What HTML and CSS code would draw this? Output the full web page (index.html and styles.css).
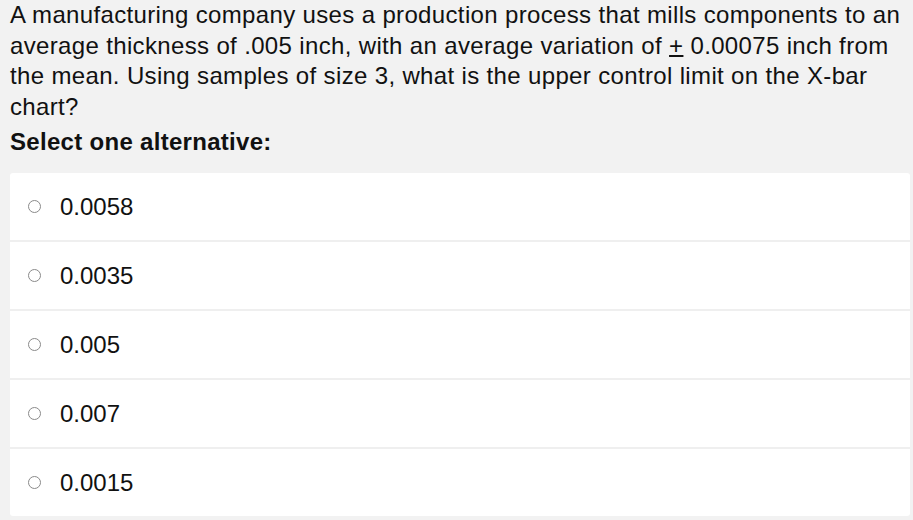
FILE: index.html
```html
<!DOCTYPE html>
<html>
<head>
<meta charset="utf-8">
<link rel="stylesheet" href="styles.css">
</head>
<body>
<div class="page">
  <p class="question">A manufacturing company uses a production process that mills components to an average thickness of .005 inch, with an average variation of <u>+</u> 0.00075 inch from the mean. Using samples of size 3, what is the upper control limit on the X-bar chart?</p>
  <p class="prompt">Select one alternative:</p>
  <ul class="options">
    <li class="option"><span class="radio"></span><span class="label">0.0058</span></li>
    <li class="option"><span class="radio"></span><span class="label">0.0035</span></li>
    <li class="option"><span class="radio"></span><span class="label">0.005</span></li>
    <li class="option"><span class="radio"></span><span class="label">0.007</span></li>
    <li class="option"><span class="radio"></span><span class="label">0.0015</span></li>
  </ul>
</div>
</body>
</html>
```

FILE: styles.css
```css
html, body {
  margin: 0;
  padding: 0;
  background: #f2f2f2;
}
.page {
  padding: 0 3px 0 10px;
  font-family: "Liberation Sans", Arial, sans-serif;
  color: #111;
}
.question {
  margin: 0;
  font-size: 24px;
  letter-spacing: 0.35px;
  line-height: 30.5px;
}
.question u {
  text-decoration-thickness: 2px;
}
.prompt {
  margin: 5px 0 0 0;
  font-size: 24px;
  letter-spacing: 0.3px;
  line-height: 30px;
  font-weight: bold;
}
.options {
  list-style: none;
  margin: 16px 0 0 0;
  padding: 0;
  background: #fff;
  border-radius: 3px;
}
.option {
  display: flex;
  align-items: center;
  height: 67px;
  border-top: 2px solid #efefef;
}
.option:first-child {
  border-top: none;
}
.radio {
  width: 11px;
  height: 11px;
  border: 1.5px solid #8a8a8a;
  border-radius: 50%;
  margin-left: 18px;
  margin-right: 19px;
  flex: none;
}
.label {
  font-size: 24px;
  line-height: 30px;
}
```
